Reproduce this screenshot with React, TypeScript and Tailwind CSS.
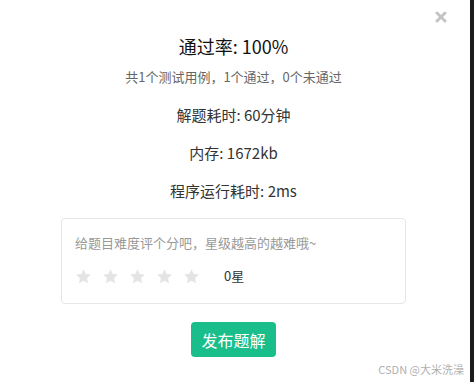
import React from "react";

const Star = () => (
  <svg width="17" height="17" viewBox="0 0 24 24">
    <path
      d="M12 1.8l3.1 6.6 7.2.9-5.3 5 1.4 7.1L12 17.9l-6.4 3.5 1.4-7.1-5.3-5 7.2-.9z"
      fill="#e4e4e4"
    />
  </svg>
);

export default function App() {
  return (
    <div className="flex h-[382px] w-[474px] font-['Noto_Sans_CJK_SC','Noto_Sans',sans-serif]">
      <div className="relative flex flex-1 flex-col items-center bg-white pr-[3px]">
        <button className="absolute left-[435px] top-[11px] h-[12px] w-[12px]" aria-label="close">
          <svg width="12" height="12" viewBox="0 0 12 12">
            <path d="M2 2L10 10M10 2L2 10" stroke="#c4c4c4" strokeWidth="3" strokeLinecap="round" />
          </svg>
        </button>
        <div className="mt-[33px] text-[18px] leading-[26px] font-normal text-[#111]">通过率: 100%</div>
        <div className="mt-[8px] text-[13px] leading-[20px] text-[#666]">共1个测试用例，1个通过，0个未通过</div>
        <div className="mt-[16px] text-[15px] leading-[24px] text-[#333]">解题耗时: 60分钟</div>
        <div className="mt-[14px] text-[15px] leading-[24px] text-[#333]">内存: 1672kb</div>
        <div className="mt-[14px] text-[15px] leading-[24px] text-[#333]">程序运行耗时: 2ms</div>
        <div className="mt-[15px] flex h-[86px] w-[345px] flex-col rounded-[4px] border border-[#e6e6e6] px-[13px] pt-[14px]">
          <div className="text-[13px] leading-[20px] text-[#999]">给题目难度评个分吧，星级越高的越难哦~</div>
          <div className="mt-[14px] flex items-center">
            <div className="flex gap-[10px]">
              <Star />
              <Star />
              <Star />
              <Star />
              <Star />
            </div>
            <span className="ml-[24px] text-[13px] leading-[18px] text-[#333]">0星</span>
          </div>
        </div>
        <button className="mt-[18px] h-[35px] w-[85px] rounded-[4px] bg-[#19be8b] text-[16px] text-white">
          发布题解
        </button>
        <div className="absolute right-[6px] bottom-[6px] text-[11px] leading-[14px] text-[#b0b0b0]">
          CSDN @大米洗澡
        </div>
      </div>
      <div className="w-[4px] bg-[#1c1c1c]" />
    </div>
  );
}
